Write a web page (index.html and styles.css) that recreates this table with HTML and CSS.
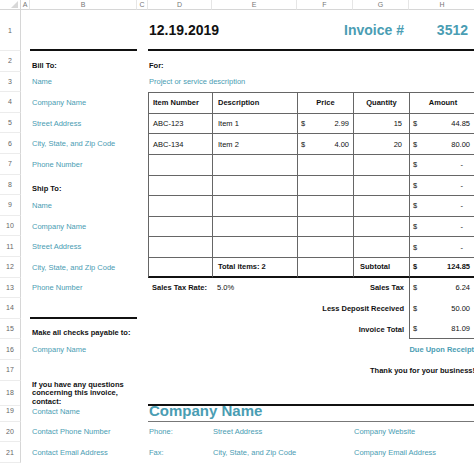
FILE: index.html
```html
<!DOCTYPE html>
<html>
<head>
<meta charset="utf-8">
<link rel="stylesheet" href="styles.css">
</head>
<body>
<div class="sheet">
  <div class="row hdr">
    <div class="c corner"><span class="tri"></span></div>
    <div class="c ch">A</div><div class="c ch">B</div><div class="c ch">C</div><div class="c ch">D</div><div class="c ch">E</div><div class="c ch">F</div><div class="c ch">G</div><div class="c ch">H</div>
  </div>
  <div class="row r1">
    <div class="c rh">1</div><div class="c"></div><div class="c thick"></div><div class="c"></div>
    <div class="c thick pd big">12.19.2019</div><div class="c thick"></div><div class="c thick"></div>
    <div class="c thick r inv tl pr5">Invoice #</div><div class="c thick r inv tl pr8">3512</div>
  </div>
  <div class="row">
    <div class="c rh">2</div><div class="c"></div><div class="c pb b bot">Bill To:</div><div class="c"></div>
    <div class="c pd b bot">For:</div><div class="c"></div><div class="c"></div><div class="c"></div><div class="c"></div>
  </div>
  <div class="row">
    <div class="c rh">3</div><div class="c"></div><div class="c pb tl">Name</div><div class="c"></div>
    <div class="c pd tl">Project or service description</div><div class="c"></div><div class="c"></div><div class="c"></div><div class="c"></div>
  </div>
  <div class="row">
    <div class="c rh">4</div><div class="c"></div><div class="c pb tl">Company Name</div><div class="c"></div>
    <div class="c t b p4">Item Number</div><div class="c t b p5">Description</div><div class="c t b mid">Price</div><div class="c t b mid">Quantity</div><div class="c t b mid">Amount</div>
  </div>
  <div class="row">
    <div class="c rh">5</div><div class="c"></div><div class="c pb tl">Street Address</div><div class="c"></div>
    <div class="c t p4">ABC-123</div><div class="c t p5">Item 1</div><div class="c t amt pri"><span>$</span><span>2.99</span></div><div class="c t r pr7">15</div><div class="c t amt"><span>$</span><span>44.85</span></div>
  </div>
  <div class="row">
    <div class="c rh">6</div><div class="c"></div><div class="c pb tl">City, State, and Zip Code</div><div class="c"></div>
    <div class="c t p4">ABC-134</div><div class="c t p5">Item 2</div><div class="c t amt pri"><span>$</span><span>4.00</span></div><div class="c t r pr7">20</div><div class="c t amt"><span>$</span><span>80.00</span></div>
  </div>
  <div class="row">
    <div class="c rh">7</div><div class="c"></div><div class="c pb tl">Phone Number</div><div class="c"></div>
    <div class="c t"></div><div class="c t"></div><div class="c t"></div><div class="c t"></div><div class="c t amt dash"><span>$</span><span>-</span></div>
  </div>
  <div class="row">
    <div class="c rh">8</div><div class="c"></div><div class="c pb b bot">Ship To:</div><div class="c"></div>
    <div class="c t"></div><div class="c t"></div><div class="c t"></div><div class="c t"></div><div class="c t amt dash"><span>$</span><span>-</span></div>
  </div>
  <div class="row">
    <div class="c rh">9</div><div class="c"></div><div class="c pb tl">Name</div><div class="c"></div>
    <div class="c t"></div><div class="c t"></div><div class="c t"></div><div class="c t"></div><div class="c t amt dash"><span>$</span><span>-</span></div>
  </div>
  <div class="row">
    <div class="c rh">10</div><div class="c"></div><div class="c pb tl">Company Name</div><div class="c"></div>
    <div class="c t"></div><div class="c t"></div><div class="c t"></div><div class="c t"></div><div class="c t amt dash"><span>$</span><span>-</span></div>
  </div>
  <div class="row">
    <div class="c rh">11</div><div class="c"></div><div class="c pb tl">Street Address</div><div class="c"></div>
    <div class="c t"></div><div class="c t"></div><div class="c t"></div><div class="c t"></div><div class="c t amt dash"><span>$</span><span>-</span></div>
  </div>
  <div class="row">
    <div class="c rh">12</div><div class="c"></div><div class="c pb tl">City, State, and Zip Code</div><div class="c"></div>
    <div class="c t tb"></div><div class="c t tb b p5">Total items: 2</div><div class="c t tb"></div><div class="c t tb b p6">Subtotal</div><div class="c t tb amt b"><span>$</span><span>124.85</span></div>
  </div>
  <div class="row">
    <div class="c rh">13</div><div class="c"></div><div class="c pb tl">Phone Number</div><div class="c"></div>
    <div class="c b p4">Sales Tax Rate:</div><div class="c p5">5.0%</div><div class="c"></div><div class="c b r pr5">Sales Tax</div><div class="c tot amt"><span>$</span><span>6.24</span></div>
  </div>
  <div class="row">
    <div class="c rh">14</div><div class="c"></div><div class="c thick"></div><div class="c"></div>
    <div class="c"></div><div class="c"></div><div class="c"></div><div class="c b r pr5">Less Deposit Received</div><div class="c tot amt"><span>$</span><span>50.00</span></div>
  </div>
  <div class="row">
    <div class="c rh">15</div><div class="c"></div><div class="c pb b bot">Make all checks payable to:</div><div class="c"></div>
    <div class="c"></div><div class="c"></div><div class="c"></div><div class="c b r pr5">Invoice Total</div><div class="c tot totb amt"><span>$</span><span>81.09</span></div>
  </div>
  <div class="row">
    <div class="c rh">16</div><div class="c"></div><div class="c pb tl">Company Name</div><div class="c"></div>
    <div class="c"></div><div class="c"></div><div class="c"></div><div class="c"></div><div class="c b tl r pr2">Due Upon Receipt</div>
  </div>
  <div class="row">
    <div class="c rh">17</div><div class="c"></div><div class="c"></div><div class="c"></div>
    <div class="c"></div><div class="c"></div><div class="c"></div><div class="c"></div><div class="c b r pr1">Thank you for your business!</div>
  </div>
  <div class="row">
    <div class="c rh">18</div><div class="c"></div><div class="c pb b wrap">If you have any questions<br>concerning this invoice,<br>contact:</div><div class="c"></div>
    <div class="c thick"></div><div class="c thick"></div><div class="c thick"></div><div class="c thick"></div><div class="c thick"></div>
  </div>
  <div class="row">
    <div class="c rh">19</div><div class="c"></div><div class="c pb tl">Contact Name</div><div class="c"></div>
    <div class="c gl pd co tl">Company Name</div><div class="c gl"></div><div class="c gl"></div><div class="c gl"></div><div class="c gl"></div>
  </div>
  <div class="row">
    <div class="c rh">20</div><div class="c"></div><div class="c pb tl">Contact Phone Number</div><div class="c"></div>
    <div class="c pd tl">Phone:</div><div class="c pd tl">Street Address</div><div class="c"></div><div class="c pd tl">Company Website</div><div class="c"></div>
  </div>
  <div class="row">
    <div class="c rh">21</div><div class="c"></div><div class="c pb tl">Contact Email Address</div><div class="c"></div>
    <div class="c pd tl">Fax:</div><div class="c pd tl">City, State, and Zip Code</div><div class="c"></div><div class="c pd tl">Company Email Address</div><div class="c"></div>
  </div>
</div>
</body>
</html>
```
FILE: styles.css
```css
html, body {
  margin: 0;
  padding: 0;
  background: #fff;
  overflow: hidden;
}
body {
  font-family: "Liberation Sans", Arial, sans-serif;
  font-size: 7.5px;
  color: #111;
}
.sheet {
  width: 476px;
}
.row {
  display: grid;
  grid-template-columns: 21px 9px 107px 11px 64px 85px 56px 56px 67px;
  height: 20.6px;
}
.row.hdr { height: 10px; }
.row.r1 { height: 41px; }
.c {
  box-sizing: border-box;
  display: flex;
  align-items: center;
  white-space: nowrap;
  min-width: 0;
  overflow: visible;
  position: relative;
}
.corner {
  border-right: 1px solid #d6d6d6;
  border-bottom: 1px solid #d6d6d6;
}
.tri {
  position: absolute;
  right: 2px;
  bottom: 1px;
  width: 0;
  height: 0;
  border-left: 7px solid transparent;
  border-bottom: 7px solid #d8d8d8;
}
.ch {
  justify-content: center;
  color: #777;
  font-size: 7px;
  border-bottom: 1px solid #d6d6d6;
  border-right: 1px solid #e6e6e6;
}
.rh {
  justify-content: center;
  color: #666;
  font-size: 7px;
  border-right: 1px solid #d6d6d6;
  border-bottom: 1px solid #ececec;
}
.b { font-weight: bold; }
.tl { color: #4a9db3; }
.pb { padding-left: 2px; }
.pd { padding-left: 1px; }
.p4 { padding-left: 4px; }
.p5 { padding-left: 5px; }
.p6 { padding-left: 6px; }
.pr1 { padding-right: 1px; }
.pr2 { padding-right: 2px; }
.pr5 { padding-right: 5px; }
.pr7 { padding-right: 7px; }
.pr8 { padding-right: 8px; }
.r { justify-content: flex-end; }
.mid { justify-content: center; }
.bot { align-items: flex-end; padding-bottom: 2px; }
.thick { border-bottom: 2px solid #111; }
.big { font-size: 14px; font-weight: bold; }
.inv { font-size: 14px; font-weight: bold; }
.t {
  border-left: 1px solid #666;
  border-top: 1px solid #666;
}
.tb { border-bottom: 2px solid #111; }
.amt {
  justify-content: space-between;
  padding: 0 6px 0 3px;
}
.pri { padding-right: 4px; }
.dash { padding-right: 13px; }
.tot { border-left: 1px solid #666; }
.totb { border-bottom: 1px solid #666; }
.wrap {
  white-space: normal;
  line-height: 8.6px;
  align-items: flex-end;
  padding-bottom: 0;
}
.gl { border-bottom: 1px solid #777; }
.co { font-size: 15px; font-weight: bold; }
```
